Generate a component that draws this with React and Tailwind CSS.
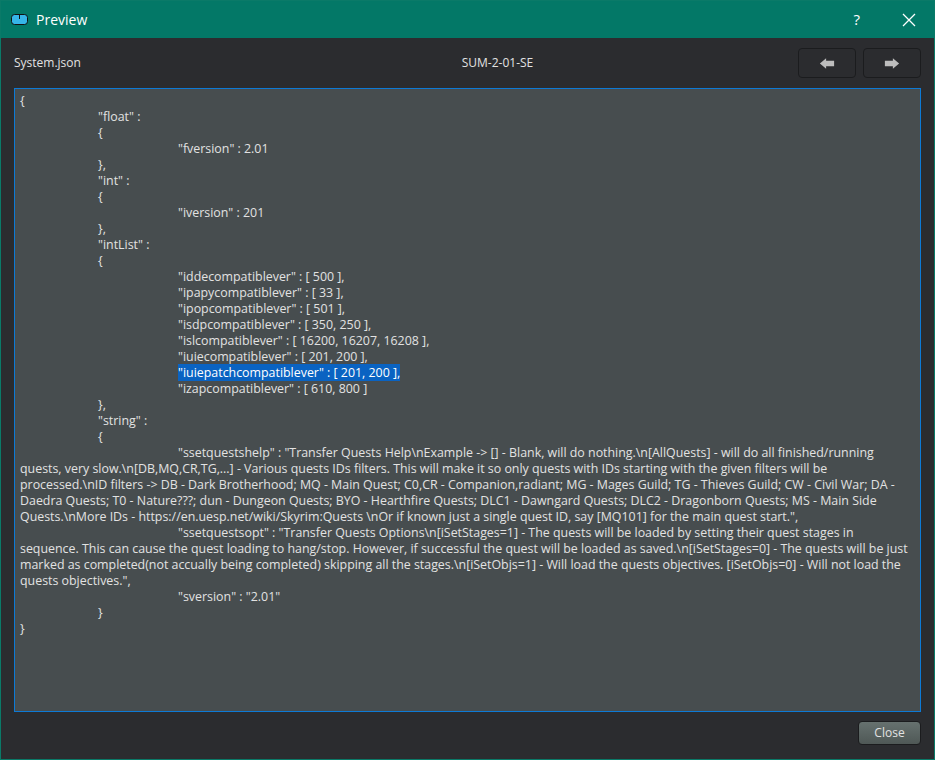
export default function App() {
  const L = (lvl, t, hl) => ({ lvl, t, hl });
  const lines = [
    L(0, "{"),
    L(1, '"float" :'),
    L(1, "{"),
    L(2, '"fversion" : 2.01'),
    L(1, "},"),
    L(1, '"int" :'),
    L(1, "{"),
    L(2, '"iversion" : 201'),
    L(1, "},"),
    L(1, '"intList" :'),
    L(1, "{"),
    L(2, '"iddecompatiblever" : [ 500 ],'),
    L(2, '"ipapycompatiblever" : [ 33 ],'),
    L(2, '"ipopcompatiblever" : [ 501 ],'),
    L(2, '"isdpcompatiblever" : [ 350, 250 ],'),
    L(2, '"islcompatiblever" : [ 16200, 16207, 16208 ],'),
    L(2, '"iuiecompatiblever" : [ 201, 200 ],'),
    L(2, '"iuiepatchcompatiblever" : [ 201, 200 ],', true),
    L(2, '"izapcompatiblever" : [ 610, 800 ]'),
    L(1, "},"),
    L(1, '"string" :'),
    L(1, "{"),
    L(2, '"ssetquestshelp" : "Transfer Quests Help\\nExample -> [] - Blank, will do nothing.\\n[AllQuests] - will do all finished/running quests, very slow.\\n[DB,MQ,CR,TG,...] - Various quests IDs filters. This will make it so only quests with IDs starting with the given filters will be processed.\\nID filters -> DB - Dark Brotherhood; MQ - Main Quest; C0,CR - Companion,radiant; MG - Mages Guild; TG - Thieves Guild; CW - Civil War; DA - Daedra Quests; T0 - Nature???; dun - Dungeon Quests; BYO - Hearthfire Quests; DLC1 - Dawngard Quests; DLC2 - Dragonborn Quests; MS - Main Side Quests.\\nMore IDs - https://en.uesp.net/wiki/Skyrim:Quests \\nOr if known just a single quest ID, say [MQ101] for the main quest start.",'),
    L(2, '"ssetquestsopt" : "Transfer Quests Options\\n[iSetStages=1] - The quests will be loaded by setting their quest stages in sequence. This can cause the quest loading to hang/stop. However, if successful the quest will be loaded as saved.\\n[iSetStages=0] - The quests will be just marked as completed(not accually being completed) skipping all the stages.\\n[iSetObjs=1] - Will load the quests objectives. [iSetObjs=0] - Will not load the quests objectives.",'),
    L(2, '"sversion" : "2.01"'),
    L(1, "}"),
    L(0, "}"),
  ];
  const ind = ["indent-0", "indent-[78px]", "indent-[158px]"];
  return (
    <div className="w-[935px] h-[760px] bg-[#2b2c2f] border border-[#0a7a68] flex flex-col text-[#e2e2e2]" style={{ fontFamily: '"Open Sans", "Noto Sans", sans-serif' }}>
      <div className="h-[37px] bg-[#037867] flex items-center px-[10px] shrink-0">
        <svg width="17" height="11" viewBox="0 0 17 11"><rect x="0.5" y="0.5" width="16" height="10" rx="3" fill="#36b5e8" stroke="#111" /><path d="M8.5 1v4" stroke="#111" /></svg>
        <span className="ml-[8px] text-[14px] text-white">Preview</span>
        <div className="flex-1" />
        <span className="text-[15px] text-white mr-[42px]">?</span>
        <svg width="14" height="14" viewBox="0 0 14 14" className="mr-[8px]"><path d="M1 1l12 12M13 1L1 13" stroke="white" strokeWidth="1.3" /></svg>
      </div>
      <div className="flex items-center h-[50px] px-[13px] shrink-0">
        <span className="text-[12px] w-[300px]">System.json</span>
        <span className="text-[12px] flex-1 text-center pl-[60px]">SUM-2-01-SE</span>
        <div className="flex gap-[7px] w-[300px] justify-end">
          {["l", "r"].map((d) => (
            <div key={d} className="w-[58px] h-[30px] rounded-[4px] bg-[#2b2c2f] border border-[#1b1c1e] flex items-center justify-center">
              <svg width="16" height="13" viewBox="0 0 18 14">
                {d === "l" ? <path d="M1 7L8 1v3h9v6H8v3z" fill="#bdbdbd" /> : <path d="M17 7L10 1v3H1v6h9v3z" fill="#bdbdbd" />}
              </svg>
            </div>
          ))}
        </div>
      </div>
      <div className="mx-[13px] h-[624px] bg-[#474d4f] border border-[#0d7ad6] px-[5px] py-[4px] text-[12.4px] leading-[16px] overflow-hidden">
        {lines.map((l, i) => (
          <div key={i} className={ind[l.lvl]}>
            {l.hl ? <span className="bg-[#0a63c2] text-white">{l.t}</span> : l.t}
          </div>
        ))}
      </div>
      <div className="flex justify-end px-[13px] pt-[9px]">
        <div className="w-[63px] h-[24px] rounded-[4px] border border-[#1b1c1e] flex items-center justify-center text-[12px]" style={{ background: "linear-gradient(#66716f,#4f5856)" }}>Close</div>
      </div>
    </div>
  );
}
